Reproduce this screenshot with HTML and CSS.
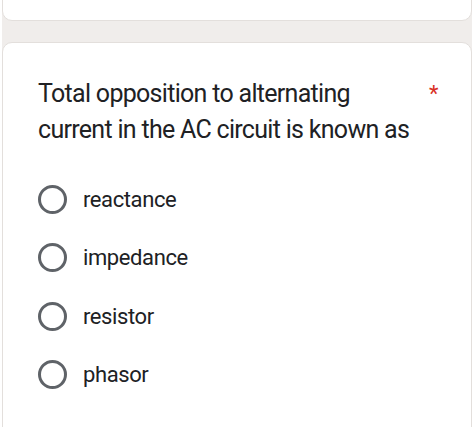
FILE: index.html
```html
<!DOCTYPE html>
<html lang="en">
<head>
<meta charset="UTF-8">
<meta name="viewport" content="width=device-width, initial-scale=1.0">
<title>Question</title>
<link rel="stylesheet" href="styles.css">
</head>
<body>
<div class="form">
    <div class="card card-prev"></div>
    <div class="card question">
        <div class="title">
            <span class="title-text">Total opposition to alternating current in the AC circuit is known as</span>
            <span class="required">*</span>
        </div>
        <div class="options">
            <label class="option"><span class="radio"></span>reactance</label>
            <label class="option"><span class="radio"></span>impedance</label>
            <label class="option"><span class="radio"></span>resistor</label>
            <label class="option"><span class="radio"></span>phasor</label>
        </div>
    </div>
</div>
</body>
</html>
```

FILE: styles.css
```css
body {
    margin: 0;
    background: #fff;
    font-family: Roboto, Arial, sans-serif;
    color: #202124;
}
.form {
    margin: 0 2px;
    background: #f0edeb;
    height: 427px;
    overflow: hidden;
}
.card {
    background: #fff;
    border: 1px solid #e3dfdc;
    border-radius: 10px;
}
.card-prev {
    height: 40px;
    margin-top: -21px;
}
.question {
    margin-top: 21px;
    height: 420px;
    padding: 33px 0 0 35px;
}
.title {
    display: flex;
    align-items: flex-start;
}
.title-text {
    width: 385px;
    font-size: 25px;
    line-height: 36px;
    letter-spacing: -0.7px;
}
.required {
    margin-left: 6px;
    color: #d93025;
    font-size: 22px;
    line-height: 35px;
}
.options {
    margin-top: 22px;
}
.option {
    display: flex;
    align-items: center;
    height: 58.5px;
    font-size: 22px;
    letter-spacing: -0.4px;
}
.radio {
    width: 23px;
    height: 23px;
    border: 3px solid #5f6368;
    border-radius: 50%;
    margin-right: 16px;
    flex-shrink: 0;
}
```
